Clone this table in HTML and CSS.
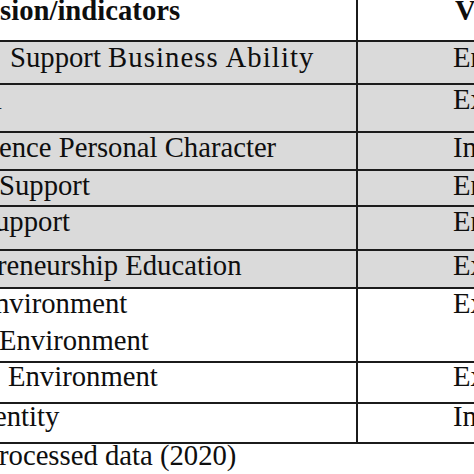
FILE: index.html
```html
<!DOCTYPE html>
<html>
<head>
<meta charset="utf-8">
<link rel="stylesheet" href="styles.css">
</head>
<body>
<div class="page">
  <div class="table">
    <div class="row head">
      <div class="ind x0">sion/indicators</div>
      <div class="val vh">V</div>
    </div>
    <div class="row gray r1">
      <div class="ind x10">Support <span class="spread">Business Ability</span></div>
      <div class="val">En</div>
    </div>
    <div class="row gray r2">
      <div class="ind xn6">l</div>
      <div class="val">Ex</div>
    </div>
    <div class="row gray r3">
      <div class="ind xn1">ence Personal Character</div>
      <div class="val">In</div>
    </div>
    <div class="row gray r4">
      <div class="ind xn1">Support</div>
      <div class="val">En</div>
    </div>
    <div class="row gray r5">
      <div class="ind xn5">upport</div>
      <div class="val">En</div>
    </div>
    <div class="row gray r6">
      <div class="ind xn3">reneurship Education</div>
      <div class="val">Ex</div>
    </div>
    <div class="row r7">
      <div class="ind">
        <span class="line xn5">nvironment</span>
        <span class="line xn1">Environment</span>
      </div>
      <div class="val">Ex</div>
    </div>
    <div class="row r8">
      <div class="ind x8">Environment</div>
      <div class="val">Ex</div>
    </div>
    <div class="row r9">
      <div class="ind xn6">entity</div>
      <div class="val">In</div>
    </div>
  </div>
  <p class="caption">rocessed data (2020)</p>
</div>
</body>
</html>
```

FILE: styles.css
```css
html, body {
  margin: 0;
  padding: 0;
  background: #ffffff;
}

.page {
  width: 474px;
  height: 474px;
  overflow: hidden;
  font-family: "Liberation Serif", "Times New Roman", serif;
  font-size: 28.7px;
  color: #0e0e0e;
  line-height: 29px;
}

.table {
  display: flex;
  flex-direction: column;
}

.row {
  display: grid;
  grid-template-columns: 358px 1fr;
  border-bottom: 2px solid #1b1b1b;
  box-sizing: border-box;
}

.gray {
  background: #dadada;
}

.ind {
  border-right: 2px solid #1b1b1b;
  white-space: nowrap;
  overflow: hidden;
}

.val {
  padding-left: 95px;
  white-space: nowrap;
}

.head {
  height: 42px;
  font-weight: bold;
  line-height: 21px;
}

.vh {
  padding-left: 97px;
}

.spread {
  letter-spacing: 1.1px;
}

.r1 { height: 43px; line-height: 30px; }
.r2 { height: 48px; }
.r3 { height: 38px; }
.r4 { height: 36px; }
.r5 { height: 44px; }
.r6 { height: 38px; }
.r7 { height: 74px; }
.r8 { height: 41px; line-height: 27px; }
.r9 { height: 40px; line-height: 25px; }

.r7 .ind {
  display: flex;
  flex-direction: column;
  gap: 8px;
}

.line {
  display: block;
}

.x0 { text-indent: 0; }
.x10 { text-indent: 10px; }
.x8 { text-indent: 8px; }
.xn1 { text-indent: -1px; }
.xn3 { text-indent: -3px; }
.xn5 { text-indent: -5px; }
.xn6 { text-indent: -6px; }

.caption {
  margin: 0;
  line-height: 23px;
  text-indent: -1px;
  white-space: nowrap;
}
```
